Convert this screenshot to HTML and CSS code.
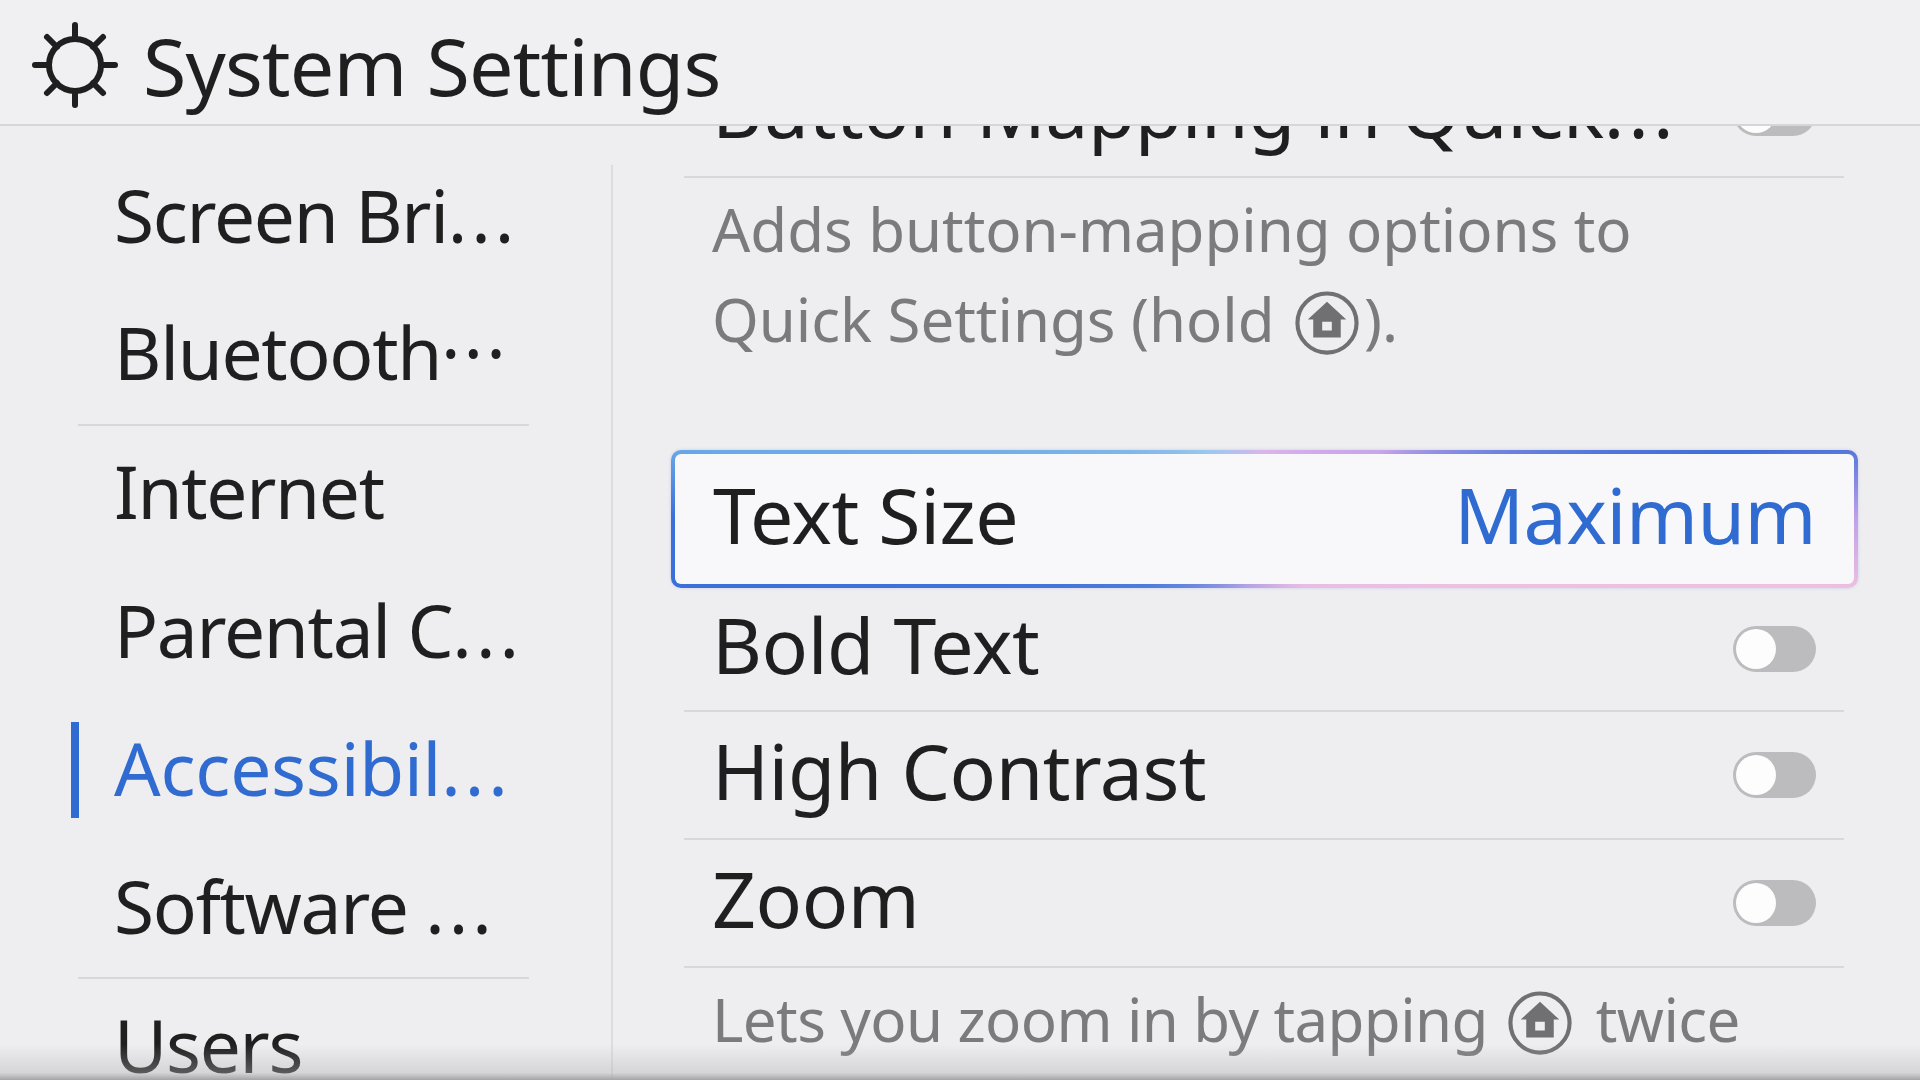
FILE: index.html
```html
<!DOCTYPE html>
<html lang="en">
  <head>
    <meta charset="UTF-8" />
    <title>System Settings</title>
    <link rel="stylesheet" href="styles.css">
  </head>
  <body>
    <svg class="icon-defs" width="0" height="0">
      <symbol id="home-btn" viewBox="0 0 48 48">
        <circle cx="24" cy="24" r="21.5" fill="none" stroke="currentColor" stroke-width="3" />
        <path fill="currentColor" fill-rule="evenodd" d="M24 8.5 L38 21.5 L34 21.5 L34 34.5 L14 34.5 L14 21.5 L10 21.5 Z M20.5 23 L20.5 29.5 L27.5 29.5 L27.5 23 Z" />
      </symbol>
    </svg>
    <div class="screen">
      <header class="header">
        <svg class="gear" viewBox="0 0 90 90">
          <circle cx="45" cy="45" r="26" />
          <path d="M45 5V19M45 71V85M5 45H19M71 45H85M17 17L27 27M63 63L73 73M73 17L63 27M27 63L17 73" />
        </svg>
        <h1>System Settings</h1>
      </header>
      <div class="body">
        <nav class="sidebar">
          <div class="nav-list">
            <div class="nav-item">Screen Bri<span class="dots">...</span></div>
            <div class="nav-item nav-end">Bluetooth<span class="dots dots-mid">···</span></div>
            <div class="nav-item">Internet</div>
            <div class="nav-item">Parental C<span class="dots">...</span></div>
            <div class="nav-item active">Accessibil<span class="dots">...</span></div>
            <div class="nav-item nav-end">Software <span class="dots">...</span></div>
            <div class="nav-item">Users</div>
          </div>
        </nav>
        <main class="content">
          <div class="row row-cut">
            <span>Button Mapping in Quick<span class="dots">...</span></span>
            <span class="toggle"></span>
          </div>
          <p class="help help-tall">
            Adds button-mapping options to<br />
            Quick Settings (hold <svg class="home"><use href="#home-btn" /></svg>).
          </p>
          <div class="row focused">
            <span>Text Size</span>
            <span class="value">Maximum</span>
          </div>
          <div class="row">
            <span>Bold Text</span>
            <span class="toggle"></span>
          </div>
          <div class="row">
            <span>High Contrast</span>
            <span class="toggle"></span>
          </div>
          <div class="row">
            <span>Zoom</span>
            <span class="toggle"></span>
          </div>
          <p class="help help-zoom">
            Lets you zoom in by tapping <svg class="home"><use href="#home-btn" /></svg> twice
          </p>
        </main>
      </div>
      <div class="bottom-fade"></div>
    </div>
  </body>
</html>
```

FILE: styles.css
```css
* {
  box-sizing: border-box;
}
body {
  margin: 0;
  background-color: #eeedef;
  color: #1f1f1f;
  font-family: "Noto Sans", sans-serif;
  overflow: hidden;
}
.icon-defs {
  display: block;
  height: 0;
}
.screen {
  position: relative;
  width: 1920px;
  height: 1080px;
  overflow: hidden;
  display: flex;
  flex-direction: column;
}
.header {
  position: relative;
  z-index: 2;
  flex: none;
  height: 126px;
  padding: 6px 0 0 30px;
  display: flex;
  align-items: center;
  gap: 23px;
  background-color: #f0eff1;
  border-bottom: 2px solid #d6d5d7;
}
.header h1 {
  margin: 0;
  font-size: 79px;
  font-weight: 400;
  letter-spacing: -0.8px;
}
.gear {
  width: 90px;
  height: 90px;
  fill: none;
  stroke: #1f1f1f;
  stroke-width: 6;
  stroke-linecap: round;
}
.body {
  flex: 1;
  display: flex;
  min-height: 0;
}
.sidebar {
  flex: none;
  width: 613px;
  margin-top: 39px;
  padding: 0 82px 0 78px;
  border-right: 2px solid #dddcde;
}
.nav-list {
  margin-top: -16px;
}
.nav-item {
  position: relative;
  height: 138.4px;
  padding: 0 0 8px 36px;
  display: flex;
  align-items: center;
  font-size: 73px;
  letter-spacing: -1.3px;
  white-space: pre;
}
.nav-end {
  border-bottom: 2px solid #d8d7d9;
}
.dots {
  letter-spacing: 4px;
}
.dots-mid {
  letter-spacing: 3px;
}
.active {
  color: #2f6bd0;
  letter-spacing: -0.2px;
}
.active::before {
  content: "";
  position: absolute;
  left: -7px;
  top: 19px;
  width: 8px;
  height: 96px;
  background-color: #2f6bd0;
}
.content {
  flex: none;
  width: 1160px;
  margin-left: 71px;
  margin-top: -76px;
}
.row {
  height: 128px;
  padding: 0 28px;
  display: flex;
  align-items: center;
  justify-content: space-between;
  font-size: 77px;
  letter-spacing: -0.5px;
  white-space: nowrap;
  border-bottom: 2px solid #d8d7d9;
}
.row > span:not(.toggle) {
  margin-bottom: 9px;
}
.focused {
  width: 1187px;
  height: 138px;
  margin-left: -13px;
  padding: 0 38px 0 38px;
  border: 4px solid transparent;
  border-radius: 10px;
  box-shadow: 0 0 3px rgba(120, 140, 230, 0.35);
  background:
    linear-gradient(#f8f8fa, #f8f8fa) padding-box,
    conic-gradient(
      #dcb4ec 0deg,
      #c8a6ea 60deg,
      #3f6fd8 82deg,
      #c2a0e8 90deg,
      #efc0e0 97deg,
      #e8bce4 150deg,
      #b4a2e4 195deg,
      #4f7ddb 240deg,
      #3a70d8 263deg,
      #3a70d8 270deg,
      #6aaae8 277deg,
      #9cc8ee 320deg,
      #dcb4ec 360deg
    ) border-box;
}
.focused + .row {
  height: 124px;
}
.value {
  color: #2f6bd0;
}
.toggle {
  position: relative;
  width: 83px;
  height: 46px;
  border-radius: 23px;
  background-color: #bcbbbd;
}
.toggle::after {
  content: "";
  position: absolute;
  left: 3px;
  top: 3px;
  width: 40px;
  height: 40px;
  border-radius: 50%;
  background-color: #fdfdfd;
}
.help {
  margin: 0;
  padding: 6px 28px 0;
  color: #7b7b7d;
  font-size: 60px;
  line-height: 90px;
  letter-spacing: -0.05px;
  white-space: nowrap;
}
.help-tall {
  height: 272px;
}
.help-zoom {
  letter-spacing: -0.6px;
}
.home {
  width: 66px;
  height: 66px;
  margin: 0 4px;
  vertical-align: -14px;
  color: #707072;
}
.help-zoom .home {
  margin-right: 8px;
}
.bottom-fade {
  position: absolute;
  z-index: 3;
  left: 0;
  right: 0;
  bottom: 0;
  height: 36px;
  background: linear-gradient(rgba(176, 176, 178, 0), rgba(176, 176, 178, 0.4) 80%, #a4a4a6 100%);
}
```
